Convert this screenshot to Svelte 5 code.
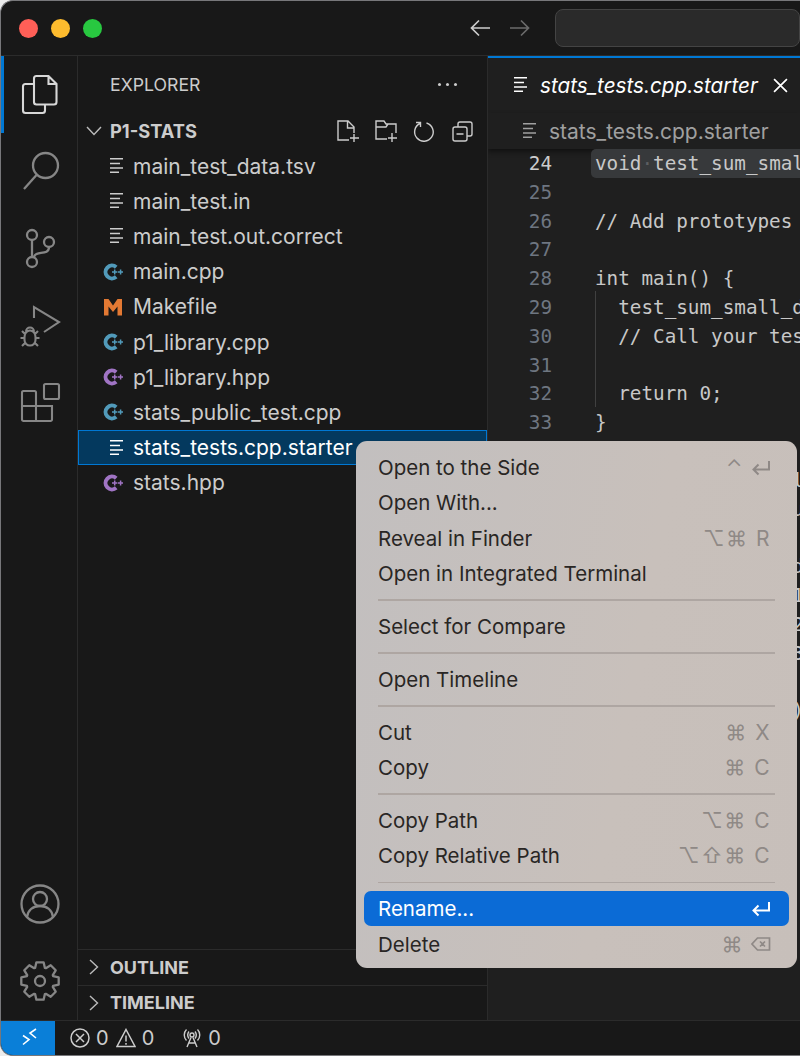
<script>
  const files = [
    { name: "main_test_data.tsv", icon: "lines" },
    { name: "main_test.in", icon: "lines" },
    { name: "main_test.out.correct", icon: "lines" },
    { name: "main.cpp", icon: "cpp" },
    { name: "Makefile", icon: "make" },
    { name: "p1_library.cpp", icon: "cpp" },
    { name: "p1_library.hpp", icon: "hpp" },
    { name: "stats_public_test.cpp", icon: "cpp" },
    { name: "stats_tests.cpp.starter", icon: "lines", selected: true },
    { name: "stats.hpp", icon: "hpp" },
  ];

  const code = [
    [24, "void test_sum_small_data_set();"],
    [25, ""],
    [26, "// Add prototypes for your other test functions here"],
    [27, ""],
    [28, "int main() {"],
    [29, "  test_sum_small_data_set();"],
    [30, "  // Call your test functions here"],
    [31, ""],
    [32, "  return 0;"],
    [33, "}"],
    [34, ""],
    [35, "void test_sum_small_data_set() {"],
    [36, "  cout << \"test_sum_small_data_set\" << endl;"],
    [37, ""],
    [38, "  vector<double> data;"],
    [39, "  data.push_back(1);"],
    [40, "  data.push_back(2);"],
    [41, "  data.push_back(3);"],
    [42, ""],
    [43, "  assert(sum(data) == 6);"],
    [44, ""],
    [45, "  cout << \"PASS!\" << endl;"],
    [46, "}"],
  ];

  const menu = [
    [
      { label: "Open to the Side", keys: "⌃", enter: true },
      { label: "Open With..." },
      { label: "Reveal in Finder", keys: "⌥⌘ R" },
      { label: "Open in Integrated Terminal" },
    ],
    [{ label: "Select for Compare" }],
    [{ label: "Open Timeline" }],
    [
      { label: "Cut", keys: "⌘ X" },
      { label: "Copy", keys: "⌘ C" },
    ],
    [
      { label: "Copy Path", keys: "⌥⌘ C" },
      { label: "Copy Relative Path", keys: "⌥⇧⌘ C" },
    ],
    [
      { label: "Rename...", enter: true, active: true },
      { label: "Delete", keys: "⌘", back: true },
    ],
  ];

  // 8 tooth cog for the settings button
  function gearPath(cx, cy, outer, inner) {
    let d = "";
    for (let i = 0; i < 8; i++) {
      const a = (i * Math.PI) / 4 - Math.PI / 2;
      const pts = [
        [inner, a - 0.36],
        [outer, a - 0.19],
        [outer, a + 0.19],
        [inner, a + 0.36],
      ];
      for (const [r, t] of pts) {
        d += (d ? "L" : "M") + (cx + r * Math.cos(t)).toFixed(1) + " " + (cy + r * Math.sin(t)).toFixed(1);
      }
    }
    return d + "Z";
  }
</script>

{#snippet linesIcon()}
  <svg class="ficon" viewBox="0 0 20 20" fill="none" stroke="currentColor" stroke-width="1.5">
    <path d="M7 2.8h13M7 7.5h10M7 12h13M7 16.2h9" />
  </svg>
{/snippet}

{#snippet cppIcon(color)}
  <svg class="ficon" viewBox="0 0 20 20" fill="none" stroke={color}>
    <path d="M13.2 5.2A6.4 6.4 0 1 0 13.2 14.8" stroke-width="4" />
    <path d="M9 10h5.4M11.7 7.6v4.8M15 10h5M17.6 7.6v4.8" stroke-width="1.5" />
  </svg>
{/snippet}

{#snippet returnIcon()}
  <svg class="ret" viewBox="0 0 20 16" fill="none" stroke="currentColor" stroke-width="2">
    <path d="M18 1v8.500H2.500M7.500 4.500l-5 5 5 5" />
  </svg>
{/snippet}

<div class="screen">
  <div class="window">
    <header class="titlebar">
      <div class="lights">
        <span class="light red"></span>
        <span class="light yellow"></span>
        <span class="light green"></span>
      </div>
      <div class="nav">
        <svg class="arrow" viewBox="0 0 20 18" fill="none" stroke="currentColor" stroke-width="1.7"><path d="M20 9H1.5M9 1.5L1.5 9 9 16.5" /></svg>
        <svg class="arrow dim" viewBox="0 0 20 18" fill="none" stroke="currentColor" stroke-width="1.7"><path d="M0 9h18.5M11 1.5L18.5 9 11 16.5" /></svg>
      </div>
      <div class="command"></div>
    </header>

    <div class="main">
      <nav class="activity">
        <div class="indicator"></div>
        <svg class="slot active" viewBox="0 56 77 77" fill="none" stroke="currentColor" stroke-width="2.1">
          <path d="M33 84h-8.5a2.500 2.500 0 0 0-2.500 2.500v24a2.500 2.500 0 0 0 2.500 2.500h17a2.500 2.500 0 0 0 2.500-2.500V104" />
          <path d="M35.500 76h12l8 8v18a2.500 2.500 0 0 1-2.500 2.500H35.500a2.500 2.500 0 0 1-2.500-2.500V78.500a2.500 2.500 0 0 1 2.500-2.500zM47.500 76v8h8" />
        </svg>
        <svg class="slot" viewBox="0 133 77 77" fill="none" stroke="currentColor" stroke-width="2.300">
          <circle cx="44.500" cy="165.500" r="12.500" />
          <path d="M35.500 175L23 189" />
        </svg>
        <svg class="slot" viewBox="0 210 77 77" fill="none" stroke="currentColor" stroke-width="2.300">
          <circle cx="31" cy="235" r="5" />
          <circle cx="31" cy="262" r="5" />
          <circle cx="48" cy="242" r="5" />
          <path d="M31 240v17M48 247c0 5-4 5.500-8 5.800-4 .3-6 1-7 4.200" />
        </svg>
        <svg class="slot" viewBox="0 287 77 77" fill="none" stroke="currentColor" stroke-width="2.100">
          <path d="M33 318v-11l25 15-15 10" />
          <path d="M23.500 337a5.500 6.500 0 0 1 11 0v3a5.500 5.500 0 0 1-11 0zM25 331.500a4 4 0 0 1 8 0M21 331l3 3M37 331l-3 3M19.500 338h4M34.500 338h4M21 346l3-3M37 346l-3-3" />
        </svg>
        <svg class="slot" viewBox="0 364 77 77" fill="none" stroke="currentColor" stroke-width="2.100">
          <rect x="43" y="384" width="15" height="15" rx="1.500" />
          <path d="M21 406v13.500a1.500 1.500 0 0 0 1.500 1.500h27a1.500 1.500 0 0 0 1.500-1.500V406zM21 406v-13.500a1.500 1.500 0 0 1 1.500-1.500h11a1.500 1.500 0 0 1 1.500 1.500V421" />
        </svg>
        <div class="spacer"></div>
        <svg class="slot" viewBox="0 866 77 77" fill="none" stroke="currentColor" stroke-width="2.300">
          <circle cx="39" cy="904" r="18.500" />
          <circle cx="39" cy="899" r="7" />
          <path d="M26 917c1-7 6-11 13-11s12 4 13 11" />
        </svg>
        <svg class="slot" viewBox="0 943 77 77" fill="none" stroke="currentColor" stroke-width="2.300">
          <path d={gearPath(39, 981, 19, 14)} stroke-linejoin="round" />
          <circle cx="39" cy="981" r="5" />
        </svg>
      </nav>

      <aside class="sidebar">
        <div class="explorer-head">
          <span>EXPLORER</span>
          <span class="dots"><i></i><i></i><i></i></span>
        </div>
        <div class="folder-head">
          <svg class="chev" viewBox="0 0 16 16" fill="none" stroke="currentColor" stroke-width="1.400"><path d="M1 4l7 7.500L15 4" /></svg>
          <b>P1-STATS</b>
          <div class="tools">
            <svg viewBox="0 0 24 24" fill="none" stroke="currentColor" stroke-width="1.400"><path d="M13 21H2V2h10l6 6v6M11.500 2v7h6.500M18 15v8M14 19h9" /></svg>
            <svg viewBox="0 0 24 24" fill="none" stroke="currentColor" stroke-width="1.400"><path d="M13 20H2V2h8l2 3h10v9M2 8h10l2-3M18 14v9M14 19h9" /></svg>
            <svg viewBox="0 0 24 24" fill="none" stroke="currentColor" stroke-width="1.400"><path d="M8 4.500A9.300 9.300 0 1 0 14.500 4M4 3.500h4.500V8" /></svg>
            <svg viewBox="0 0 24 24" fill="none" stroke="currentColor" stroke-width="1.400"><rect x="3" y="8" width="14" height="14" rx="2" /><path d="M8 8V5a2 2 0 0 1 2-2h10a2 2 0 0 1 2 2v10a2 2 0 0 1-2 2h-3M6.500 15h7" /></svg>
          </div>
        </div>
        <ul class="tree">
          {#each files as f}
            <li class:selected={f.selected}>
              {#if f.icon === "lines"}
                {@render linesIcon()}
              {:else if f.icon === "cpp"}
                {@render cppIcon("#519aba")}
              {:else if f.icon === "hpp"}
                {@render cppIcon("#a074c4")}
              {:else}
                <svg class="ficon" viewBox="0 0 20 20"><path fill="#e37933" d="M1 18.500V2h4.500L10 8.500 14.500 2H19v16.500h-4.500V9.500L10 15 5.500 9.500v9z" /></svg>
              {/if}
              <span>{f.name}</span>
            </li>
          {/each}
        </ul>
        <div class="section">
          <svg class="chev side" viewBox="0 0 16 16" fill="none" stroke="currentColor" stroke-width="1.400"><path d="M4 1l7.500 7L4 15" /></svg>
          <b>OUTLINE</b>
        </div>
        <div class="section">
          <svg class="chev side" viewBox="0 0 16 16" fill="none" stroke="currentColor" stroke-width="1.400"><path d="M4 1l7.500 7L4 15" /></svg>
          <b>TIMELINE</b>
        </div>
      </aside>

      <section class="editor">
        <div class="tabs">
          <div class="tab">
            {@render linesIcon()}
            <em>stats_tests.cpp.starter</em>
            <svg class="close" viewBox="0 0 14 14" fill="none" stroke="currentColor" stroke-width="1.600"><path d="M1 1l12 12M13 1L1 13" /></svg>
          </div>
        </div>
        <div class="crumbs">
          {@render linesIcon()}
          <span>stats_tests.cpp.starter</span>
        </div>
        <div class="code">
          <div class="guide"></div>
          {#each code as [n, text]}
            <div class="line" class:current={n === 24}>
              <span class="num">{n}</span>
              {#if n === 24}
                <span class="text hl">void<span class="ws">·</span>test_sum_small_data_set();</span>
              {:else}
                <span class="text">{text}</span>
              {/if}
            </div>
          {/each}
        </div>
      </section>
    </div>

    <footer class="status">
      <div class="remote">
        <svg viewBox="0 0 18 20" fill="none" stroke="currentColor" stroke-width="1.600"><path d="M4 7.500l6 4-6 5M17 1l-6 4 6 5" /></svg>
      </div>
      <svg class="sicon first" viewBox="0 0 20 20" fill="none" stroke="currentColor" stroke-width="1.500"><circle cx="10" cy="10" r="9" /><path d="M6 6l8 8M14 6l-8 8" /></svg>
      <span class="count">0</span>
      <svg class="sicon warn" viewBox="0 0 20 20" fill="none" stroke="currentColor" stroke-width="1.500"><path d="M10 1.500L19 18.500H1zM10 7.500v6M10 15v1.800" /></svg>
      <span class="count">0</span>
      <svg class="sicon ports" viewBox="0 0 20 20" fill="none" stroke="currentColor" stroke-width="1.400"><circle cx="10" cy="7" r="2" /><path d="M4.500 1.500c-3 3-3 8 0 11M15.500 1.500c3 3 3 8 0 11M7 3.500c-1.500 2-1.500 5 0 7M13 3.500c1.500 2 1.500 5 0 7M9 9.500L5 19M11 9.500L15 19M6.500 15h7" /></svg>
      <span class="count">0</span>
    </footer>
  </div>

  <div class="menu">
    {#each menu as group, g}
      {#if g > 0}
        <div class="sep"></div>
      {/if}
      {#each group as item}
        <div class="item" class:active={item.active}>
          <span>{item.label}</span>
          <span class="keys">
            {#if item.keys}<span>{item.keys}</span>{/if}
            {#if item.enter}{@render returnIcon()}{/if}
            {#if item.back}
              <svg class="ret" viewBox="0 0 20 16" fill="none" stroke="currentColor" stroke-width="1.700"><path d="M6.500 2H18.500V14H6.500L1 8zM9 5.500l5 5M14 5.500l-5 5" /></svg>
            {/if}
          </span>
        </div>
      {/each}
    {/each}
  </div>
</div>

<style>
  :global(body) {
    margin: 0;
    background: #ececec;
  }

  .screen {
    position: relative;
    width: 800px;
    height: 1056px;
    overflow: hidden;
    font-family: Inter, "Liberation Sans", sans-serif;
    font-size: 21px;
    color: #cccccc;
  }

  .window {
    box-sizing: border-box;
    height: 1056px;
    display: flex;
    flex-direction: column;
    background: #181818;
    border: 1px solid #77777a;
    border-right: 0;
    border-radius: 13px 0 0 13px;
    overflow: hidden;
  }

  .titlebar {
    box-sizing: border-box;
    height: 55px;
    flex: none;
    display: flex;
    align-items: center;
    border-bottom: 1px solid #2b2b2b;
  }

  .lights {
    display: flex;
    gap: 13px;
    margin-left: 18px;
  }

  .light {
    width: 19px;
    height: 19px;
    border-radius: 50%;
  }

  .red { background: #ff5f57; }
  .yellow { background: #febc2e; }
  .green { background: #28c840; }

  .nav {
    display: flex;
    gap: 20px;
    margin-left: 368px;
    color: #cccccc;
  }

  .arrow {
    width: 20px;
    height: 18px;
  }

  .arrow.dim {
    color: #6b6b6b;
  }

  .command {
    box-sizing: border-box;
    width: 260px;
    height: 38px;
    margin-left: 25px;
    background: #2a2a2a;
    border: 1px solid #444444;
    border-radius: 8px;
  }

  .main {
    flex: 1;
    min-height: 0;
    display: flex;
  }

  .activity {
    position: relative;
    box-sizing: border-box;
    width: 77px;
    flex: none;
    display: flex;
    flex-direction: column;
    border-right: 1px solid #2b2b2b;
    color: #868686;
  }

  .indicator {
    position: absolute;
    left: 0;
    top: 0;
    width: 3px;
    height: 77px;
    background: #0078d4;
  }

  .slot {
    width: 77px;
    height: 77px;
    flex: none;
  }

  .slot.active {
    color: #d7d7d7;
  }

  .spacer {
    flex: 1;
  }

  .sidebar {
    box-sizing: border-box;
    width: 410px;
    flex: none;
    display: flex;
    flex-direction: column;
    border-right: 1px solid #2b2b2b;
  }

  .explorer-head {
    height: 57.500px;
    flex: none;
    display: flex;
    align-items: center;
    justify-content: space-between;
    padding: 0 30px 0 32px;
    font-size: 17.700px;
  }

  .dots {
    display: flex;
    gap: 5px;
  }

  .dots i {
    width: 3px;
    height: 3px;
    border-radius: 50%;
    background: #cccccc;
  }

  .folder-head {
    height: 35px;
    flex: none;
    display: flex;
    align-items: center;
    padding-left: 8px;
    font-size: 18.300px;
  }

  .chev {
    width: 16px;
    height: 16px;
    margin-right: 8px;
    color: #bbbbbb;
  }

  .folder-head b,
  .section b {
    font-weight: 700;
  }

  .tools {
    margin-left: auto;
    display: flex;
    gap: 14px;
    padding-right: 13px;
  }

  .tools svg {
    width: 24px;
    height: 24px;
  }

  .tree {
    list-style: none;
    margin: 0;
    padding: 0;
    flex: 1;
  }

  .tree li {
    box-sizing: border-box;
    height: 35.200px;
    display: flex;
    align-items: center;
    padding-left: 25px;
  }

  .tree li.selected {
    background: #04395e;
    outline: 1.500px solid #0078d4;
    outline-offset: -1.500px;
    color: #ffffff;
  }

  .ficon {
    width: 20px;
    height: 20px;
    flex: none;
    margin-right: 10px;
  }

  .section {
    box-sizing: border-box;
    height: 35.500px;
    flex: none;
    display: flex;
    align-items: center;
    padding-left: 8px;
    border-top: 1px solid #2b2b2b;
    font-size: 18px;
  }

  .editor {
    flex: 1;
    min-width: 0;
    display: flex;
    flex-direction: column;
    background: #1f1f1f;
    overflow: hidden;
  }

  .tabs {
    height: 57px;
    flex: none;
    background: #1f1f1f;
    border-top: 2.500px solid #0078d4;
    box-sizing: border-box;
  }

  .tab {
    height: 54px;
    display: flex;
    align-items: center;
    padding-left: 19px;
    color: #ffffff;
    font-size: 20.700px;
  }

  .tab .ficon {
    margin: 0;
  }

  .tab em {
    margin-left: 13px;
    font-style: italic;
  }

  .close {
    width: 15px;
    height: 15px;
    margin-left: 15px;
  }

  .crumbs {
    position: relative;
    height: 36px;
    flex: none;
    display: flex;
    align-items: center;
    padding-left: 28px;
    color: #a0a0a0;
    box-shadow: 0 3px 5px rgba(0, 0, 0, 0.45);
  }

  .crumbs .ficon {
    margin-right: 13px;
  }

  .code {
    position: relative;
    font-family: "DejaVu Sans Mono", monospace;
    font-size: 19.300px;
    color: #c8c8c8;
  }

  .guide {
    position: absolute;
    left: 107px;
    top: 142px;
    width: 1px;
    height: 116px;
    background: #404040;
  }

  .line {
    height: 28.800px;
    line-height: 30.800px;
    display: flex;
    align-items: stretch;
  }

  .num {
    width: 64px;
    flex: none;
    text-align: right;
    color: #6e7681;
    margin-right: 43px;
  }

  .line.current .num {
    color: #cccccc;
  }

  .text {
    white-space: pre;
  }

  .text.hl {
    background: #37393b;
    border-radius: 5px;
    margin-left: -4px;
    padding-left: 4px;
    flex: 1;
  }

  .ws {
    color: #5c5f62;
  }

  .status {
    box-sizing: border-box;
    height: 35px;
    flex: none;
    display: flex;
    align-items: center;
    border-top: 1px solid #2b2b2b;
    font-size: 20px;
    color: #cccccc;
  }

  .remote {
    width: 54px;
    height: 100%;
    display: flex;
    align-items: center;
    justify-content: center;
    background: #0a7fd8;
    color: #ffffff;
  }

  .remote svg {
    width: 18px;
    height: 20px;
  }

  .sicon {
    width: 20px;
    height: 20px;
    flex: none;
  }

  .sicon.first { margin-left: 15px; }
  .sicon.warn { margin-left: 7px; }
  .sicon.ports { margin-left: 28px; }

  .count {
    margin-left: 6px;
  }

  .menu {
    position: absolute;
    left: 356px;
    top: 441px;
    box-sizing: border-box;
    width: 441px;
    height: 527px;
    padding: 9px 8px;
    background: linear-gradient(100deg, #c2bfbf, #c8c0bb 60%, #c7bfba);
    border-radius: 11px;
    color: #292624;
    font-size: 20.500px;
  }

  .item {
    height: 35.300px;
    display: flex;
    align-items: center;
    justify-content: space-between;
    padding: 0 18px 0 14px;
    border-radius: 7px;
  }

  .item.active {
    background: #0b6bd6;
    color: #ffffff;
  }

  .keys {
    display: flex;
    align-items: center;
    gap: 7px;
    font-family: Inter, "DejaVu Sans", sans-serif;
    font-size: 21px;
    letter-spacing: 1.500px;
    color: #8f8986;
  }

  .item.active .keys {
    color: #ffffff;
  }

  .ret {
    width: 20px;
    height: 16px;
  }

  .sep {
    height: 17.650px;
    display: flex;
    align-items: center;
    padding: 0 14px;
  }

  .sep::after {
    content: "";
    flex: 1;
    height: 1.500px;
    background: #aea6a2;
  }
</style>
